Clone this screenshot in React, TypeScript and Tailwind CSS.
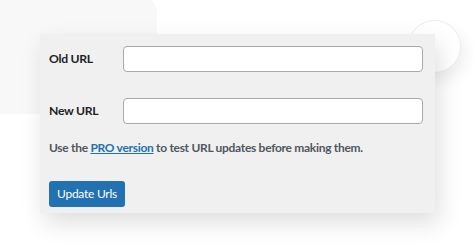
export default function App() {
  return (
    <div className="relative w-[474px] h-[248px] bg-white overflow-hidden" style={{ fontFamily: 'Lato, "Noto Sans", sans-serif' }}>
      <div className="absolute left-[-20px] top-[-8px] w-[177px] h-[122px] rounded-[22px] bg-[#f8f8f9]" />
      <div className="absolute left-[408px] top-[20px] w-[53px] h-[53px] rounded-full bg-white border border-[#ececec] shadow-[6px_8px_14px_rgba(0,0,0,0.06)]" />
      <div className="relative ml-[40px] mt-[34px] w-[395px] h-[179px] bg-[#f0f0f1] shadow-[4px_10px_22px_rgba(0,0,0,0.13)] px-[9px] pt-[12px]">
        <div className="flex items-center h-[26px]">
          <label className="w-[74px] text-[12.2px] tracking-[-0.3px] font-bold text-[#1d2327]">Old URL</label>
          <div className="w-[300px] h-[26px] bg-white border border-[#a7aaad] rounded-[4px]" />
        </div>
        <div className="flex items-center h-[26px] mt-[26px]">
          <label className="w-[74px] text-[12.2px] tracking-[-0.3px] font-bold text-[#1d2327]">New URL</label>
          <div className="w-[300px] h-[26px] bg-white border border-[#a7aaad] rounded-[4px]" />
        </div>
        <p className="mt-[15px] text-[12px] tracking-[-0.3px] font-bold text-[#50575e] leading-[18px]">
          Use the <a className="text-[#2271b1] underline">PRO version</a> to test URL updates before making them.
        </p>
        <button className="mt-[24px] w-[76px] h-[26px] rounded-[3px] bg-[#2271b1] text-white text-[12px] tracking-[-0.25px]">Update Urls</button>
      </div>
    </div>
  )
}
